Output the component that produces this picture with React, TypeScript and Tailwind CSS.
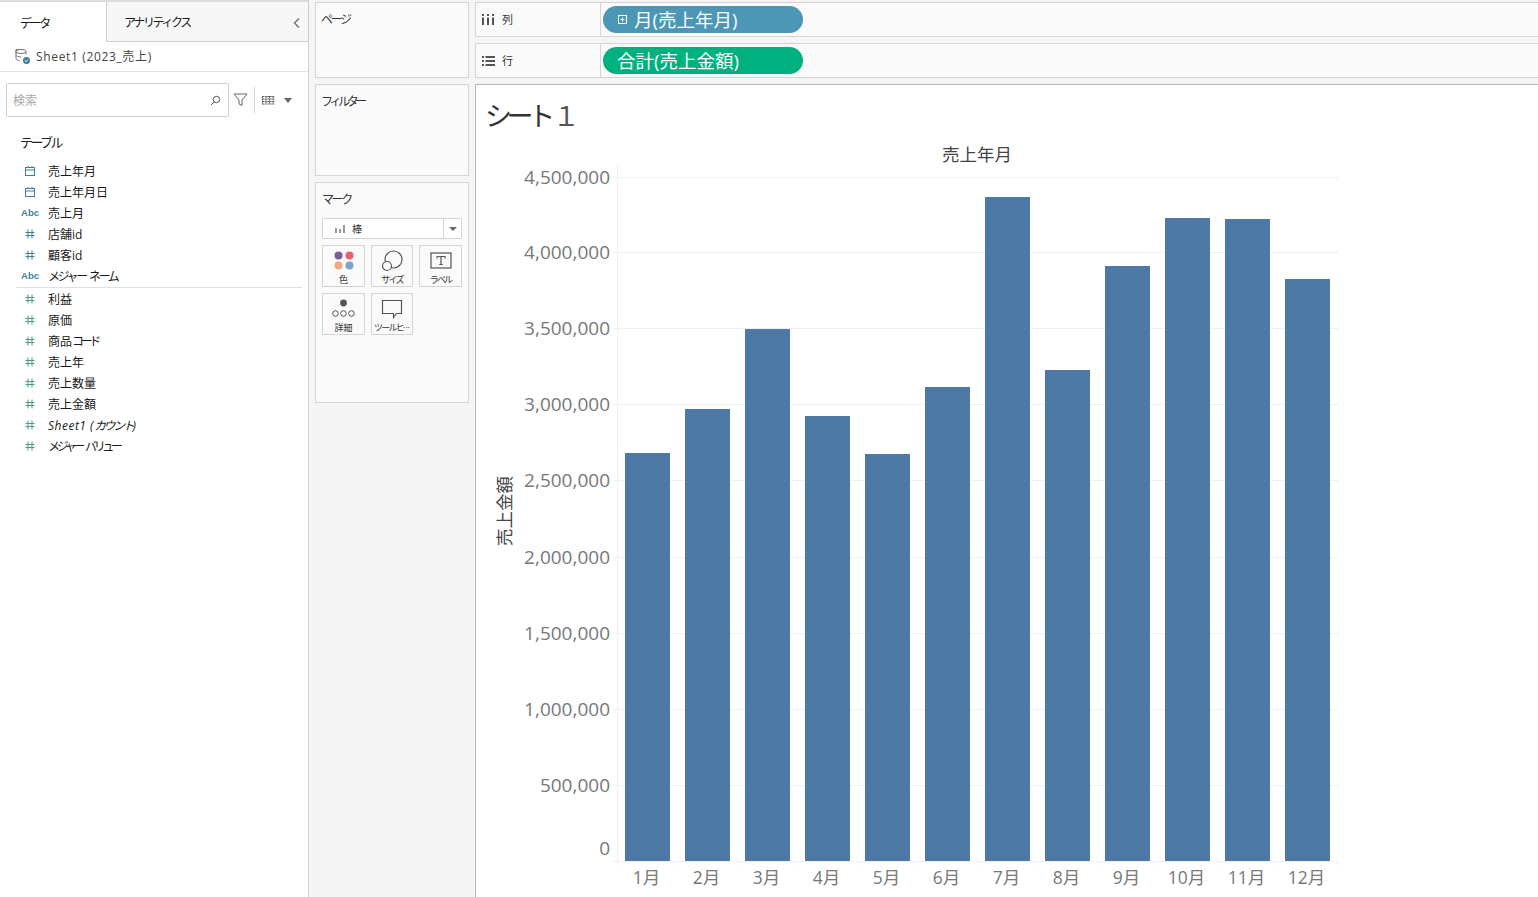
import React from "react";

const F = "[font-family:'Open_Sans','Noto_Sans_CJK_JP',sans-serif]";

// The reference's UI font sets katakana much narrower than its kanji.
function K({ s, tight }: { s: string; tight?: boolean }) {
  const parts = s.split(/([ァ-ヿ]+)/);
  return (
    <>
      {parts.map((p, i) =>
        /^[ァ-ヿ]/.test(p) ? (
          <span key={i} className={tight ? "tracking-[-0.28em]" : "tracking-[-0.2em]"}>{p}</span>
        ) : (
          <span key={i}>{p}</span>
        )
      )}
    </>
  );
}

function CalIcon() {
  return (
    <svg width="12" height="12" viewBox="0 0 12 12" fill="none" stroke="#3f7f9c" strokeWidth="1">
      <rect x="1.5" y="2.5" width="9" height="8" />
      <path d="M1.5 5h9M4 1v2M8 1v2" />
    </svg>
  );
}
function HashIcon({ color }: { color: string }) {
  return (
    <svg width="10" height="10" viewBox="0 0 10 10" fill="none" stroke={color} strokeWidth="1">
      <path d="M3 .5v9M7 .5v9M.5 3.5h9M.5 6.5h9" />
    </svg>
  );
}
function Abc() {
  return <span className="text-[9.5px] leading-none font-bold text-[#3f7f9c] [font-family:'Liberation_Sans',sans-serif]">Abc</span>;
}

type Row = { kind: "cal" | "abc" | "blue" | "green"; name: string; italic?: boolean; tight?: boolean };
const dims: Row[] = [
  { kind: "cal", name: "売上年月" },
  { kind: "cal", name: "売上年月日" },
  { kind: "abc", name: "売上月" },
  { kind: "blue", name: "店舗id" },
  { kind: "blue", name: "顧客id" },
  { kind: "abc", name: "メジャー ネーム" },
];
const meas: Row[] = [
  { kind: "green", name: "利益" },
  { kind: "green", name: "原価" },
  { kind: "green", name: "商品コード", tight: true },
  { kind: "green", name: "売上年" },
  { kind: "green", name: "売上数量" },
  { kind: "green", name: "売上金額" },
  { kind: "green", name: "Sheet1 (カウント)", italic: true },
  { kind: "green", name: "メジャー バリュー", tight: true },
];

function FieldRow({ r }: { r: Row }) {
  return (
    <div className="flex h-[21px] items-center">
      <div className="flex w-[48px] shrink-0 justify-center pl-[12px]">
        {r.kind === "cal" && <CalIcon />}
        {r.kind === "abc" && <Abc />}
        {r.kind === "blue" && <HashIcon color="#3f7f9c" />}
        {r.kind === "green" && <HashIcon color="#4a9c80" />}
      </div>
      <span className={`whitespace-nowrap pt-[2px] text-[12px] text-[#1a1a1a] ${r.italic ? "italic tracking-[0.5px]" : ""}`}><K s={r.name} tight={r.tight} /></span>
    </div>
  );
}

function LeftPanel() {
  return (
    <div className="flex h-full w-[309px] shrink-0 flex-col border-r border-[#cfcfcf] bg-white">
      <div className="flex h-[42px] shrink-0 border-t-2 border-[#dcdcdc]">
        <div className="flex w-[107px] items-center border-r border-[#d0d0d0] pl-[20px] pt-[3px] text-[12px] text-[#1a1a1a]"><K s="データ" /></div>
        <div className="flex flex-1 items-center justify-between border-b border-[#d0d0d0] bg-[#f7f7f7] pl-[17px] pr-[7px] pt-[3px] text-[12px] text-[#1a1a1a]">
          <span><K s="アナリティクス" /></span>
          <svg width="8" height="12" viewBox="0 0 8 12" fill="none" stroke="#666" strokeWidth="1.2"><path d="M6 1.5 1.5 6 6 10.5" /></svg>
        </div>
      </div>
      <div className="flex h-[30px] shrink-0 items-center border-b border-[#e2e2e2] pl-[14px]">
        <svg width="17" height="17" viewBox="0 0 17 17" fill="none" stroke="#777" strokeWidth="1">
          <ellipse cx="7" cy="3.5" rx="5" ry="2" />
          <path d="M2 3.5v7c0 1 1.5 2 3.5 2M12 3.5v3M2 7c0 1 2 2 5 2" />
          <path d="M5 1.5h-3v4" />
          <circle cx="12.5" cy="12.5" r="3.5" fill="#3f7f9c" stroke="none" />
          <path d="m10.8 12.5 1.2 1.2 2-2.2" stroke="#fff" />
        </svg>
        <span className="ml-[5px] pt-px text-[12px] tracking-[0.65px] text-[#444]">Sheet1 (2023_売上)</span>
      </div>
      <div className="flex items-center pl-[6px] pt-[11px]">
        <div className="flex h-[34px] w-[223px] items-center justify-between rounded-[2px] border border-[#cfcfcf] pl-[6px] pr-[7px]">
          <span className="pt-[2px] text-[12px] text-[#a8a8a8]">検索</span>
          <svg width="11" height="11" viewBox="0 0 11 11" fill="none" stroke="#555" strokeWidth="1"><circle cx="6.5" cy="4.5" r="3.2" /><path d="M4.2 6.8 1 10" /></svg>
        </div>
        <svg className="ml-[4px]" width="15" height="14" viewBox="0 0 15 14" fill="none" stroke="#666" strokeWidth="1"><path d="M1 1h13L9 7v5.5L6 11V7z" /></svg>
        <div className="ml-[6px] h-[26px] w-px bg-[#d8d8d8]" />
        <svg className="ml-[7px]" width="13" height="10" viewBox="0 0 13 10" fill="none" stroke="#666" strokeWidth="1"><path d="M0 1.5h13M0 4h13M0 6.5h13M0 9h13M.5 1v8M4 1v8M7.5 1v8M11 1v8" strokeDasharray="2 .6" /></svg>
        <svg className="ml-[9px]" width="8" height="5" viewBox="0 0 8 5" fill="#666"><path d="M0 0h8L4 5z" /></svg>
      </div>
      <div className="pl-[20px] pt-[15px] text-[13px] leading-[20px] text-[#222]"><K s="テーブル" /></div>
      <div className="mt-[8px]">
        {dims.map((r) => <FieldRow key={r.name} r={r} />)}
      </div>
      <div className="ml-[16px] mr-[6px] mt-px h-px bg-[#e0e0e0]" />
      <div>
        {meas.map((r) => <FieldRow key={r.name} r={r} />)}
      </div>
    </div>
  );
}

function MarkBtn({ label, children }: { label: string; children: React.ReactNode }) {
  return (
    <div className="flex h-[42px] flex-col items-center justify-between border border-[#d4d4d4] pt-[2px] pb-[1px]">
      <div className="flex h-[25px] items-center">{children}</div>
      <span className="whitespace-nowrap text-[9px] leading-[11px] text-[#333]"><K s={label} /></span>
    </div>
  );
}

function MiddlePanel() {
  return (
    <div className="flex h-full w-[166px] shrink-0 flex-col gap-[6px] px-[6px] pt-[2px]">
      <div className="h-[76px] border border-[#d4d4d4] bg-[#fafafa] pl-[5px] pt-[8px] text-[12px] leading-[18px] text-[#333]"><K s="ページ" /></div>
      <div className="h-[92px] border border-[#d4d4d4] bg-[#fafafa] pl-[5px] pt-[8px] text-[12px] leading-[18px] text-[#333]"><K s="フィルター" tight /></div>
      <div className="h-[221px] border border-[#d4d4d4] bg-[#fafafa] px-[6px] pt-[8px]">
        <div className="text-[12px] leading-[18px] text-[#333]"><K s="マーク" /></div>
        <div className="mt-[9px] flex h-[21px] items-center rounded-[1px] border border-[#d4d4d4] bg-white">
          <div className="flex flex-1 items-center pl-[12px]">
            <svg width="10" height="9" viewBox="0 0 10 9" fill="#999"><path d="M0 4h2v5H0zM4 5h2v4H4zM8 1h2v8H8z" /></svg>
            <span className="ml-[7px] pt-[2px] text-[10px] text-[#333]">棒</span>
          </div>
          <div className="flex h-full w-[18px] items-center justify-center border-l border-[#d4d4d4]">
            <svg width="8" height="4" viewBox="0 0 8 4" fill="#666"><path d="M0 0h8L4 4z" /></svg>
          </div>
        </div>
        <div className="mt-[6px] grid grid-cols-[43px_42px_43px] gap-x-[6px] gap-y-[6px]">
          <MarkBtn label="色">
            <svg width="20" height="19" viewBox="0 0 20 19">
              <circle cx="4.5" cy="4.5" r="4" fill="#7b5e93" />
              <circle cx="15.5" cy="4.5" r="4" fill="#ee5f72" />
              <circle cx="4.5" cy="14.5" r="4" fill="#f4a582" />
              <circle cx="15.5" cy="14.5" r="4" fill="#7ba3cc" />
            </svg>
          </MarkBtn>
          <MarkBtn label="サイズ">
            <svg width="22" height="22" viewBox="0 0 22 22" fill="none" stroke="#555" strokeWidth="1.2">
              <circle cx="12.5" cy="9.5" r="8.5" />
              <circle cx="6" cy="16" r="4.5" fill="#fafafa" />
            </svg>
          </MarkBtn>
          <MarkBtn label="ラベル">
            <svg width="22" height="17" viewBox="0 0 22 17" fill="none">
              <rect x="1" y="1" width="20" height="15" stroke="#555" strokeWidth="1.2" />
              <path d="M7 4.5h8v2M7 4.5v2M11 4.5v8M9.2 12.5h3.6" stroke="#555" strokeWidth="1.2" />
            </svg>
          </MarkBtn>
          <MarkBtn label="詳細">
            <svg width="23" height="20" viewBox="0 0 23 20" fill="none">
              <circle cx="11.5" cy="4" r="3.4" fill="#555" />
              <circle cx="3.5" cy="14.5" r="2.8" stroke="#555" />
              <circle cx="11.5" cy="14.5" r="2.8" stroke="#555" />
              <circle cx="19.5" cy="14.5" r="2.8" stroke="#555" />
            </svg>
          </MarkBtn>
          <MarkBtn label="ツールヒ···">
            <svg width="22" height="20" viewBox="0 0 22 20" fill="none" stroke="#555" strokeWidth="1.2">
              <path d="M1.5 1.5h19v13h-5l-3 4v-4h-11z" />
            </svg>
          </MarkBtn>
        </div>
      </div>
    </div>
  );
}

function Shelf({ label, icon, pill, pillClass, plus }: { label: string; icon: React.ReactNode; pill: string; pillClass: string; plus?: boolean }) {
  return (
    <div className="flex h-[35px] border-y border-[#d4d4d4] bg-[#fafafa]">
      <div className="flex w-[125px] items-center border-l border-[#d4d4d4] pl-[6px]">
        <div className="flex w-[20px] justify-start">{icon}</div>
        <span className="pt-[2px] text-[11px] text-[#333]">{label}</span>
      </div>
      <div className="flex flex-1 items-center border-l border-[#d4d4d4] pl-[2px]">
        <div className={`flex h-[27px] w-[200px] items-center rounded-full text-white ${pillClass}`}>
          {plus && (
            <svg className="mr-[7px]" width="9" height="9" viewBox="0 0 9 9" fill="none" stroke="#fff" strokeWidth="1"><rect x=".5" y=".5" width="8" height="8" /><path d="M2.5 4.5h4M4.5 2.5v4" /></svg>
          )}
          <span className="whitespace-nowrap pt-[2px] text-[18.5px] leading-none">{pill}</span>
        </div>
      </div>
    </div>
  );
}

const W = 1062;
const bars = [453, 409, 329, 416, 454, 387, 197, 370, 266, 218, 219, 279];
const grid = [177, 252.5, 328.5, 404.5, 480.5, 557, 633, 709, 785];
const yLabels = [
  ["4,500,000", 177], ["4,000,000", 252], ["3,500,000", 328], ["3,000,000", 404], ["2,500,000", 480],
  ["2,000,000", 557], ["1,500,000", 633], ["1,000,000", 709], ["500,000", 785], ["0", 848],
] as const;

function Chart() {
  // svg origin is page x=476, y=130
  const ox = 476, oy = 130;
  return (
    <svg className="block" width={W} height={767} viewBox={`${ox} ${oy} ${W} 767`}>
      <g fontFamily="'Noto Sans CJK JP', sans-serif">
        <text x="977" y="161" textAnchor="middle" fontSize="17.5" fill="#444">売上年月</text>
        <text transform="translate(511 511) rotate(-90)" textAnchor="middle" fontSize="17.5" fill="#444">売上金額</text>
      </g>
      <path d="M617.5 165V866" stroke="#f0f0f0" />
      {[...grid, 861].map((y) => (
        <path key={y} d={`M613 ${Math.floor(y) + 0.5}H1338.5`} stroke="#f0f0f0" />
      ))}
      {Array.from({ length: 13 }).map((_, i) => (
        <path key={i} d={`M${617.5 + 60 * i} 861V866`} stroke="#f0f0f0" />
      ))}
      {bars.map((t, i) => (
        <rect key={i} x={625 + 60 * i} y={t} width="45" height={861 - t} fill="#4e79a7" />
      ))}
      <g fontFamily="'Open Sans', sans-serif" fontSize="19" fill="#787878" textAnchor="end">
        {yLabels.map(([s, y]) => (
          <text key={s} x="610" y={y + 7}>{s}</text>
        ))}
      </g>
      <g fontFamily="'Open Sans','Noto Sans CJK JP', sans-serif" fontSize="17.5" fill="#787878" textAnchor="middle">
        {bars.map((_, i) => (
          <text key={i} x={646.5 + 60 * i} y="884">{i + 1}月</text>
        ))}
      </g>
    </svg>
  );
}

function RightPanel() {
  return (
    <div className="flex h-full min-w-0 flex-1 flex-col pt-[2px]">
      <div className="flex flex-col gap-[6px]">
        <Shelf
          label="列"
          pill="月(売上年月)"
          pillClass="bg-[#4b97b5] pl-[15px]"
          plus
          icon={<svg width="12" height="11" viewBox="0 0 12 11" fill="#555"><path d="M0 0h2v2H0zM5 0h2v2H5zM10 0h2v2h-2zM0 3.5h2V11H0zM5 3.5h2V11H5zM10 3.5h2V11h-2z" /></svg>}
        />
        <Shelf
          label="行"
          pill="合計(売上金額)"
          pillClass="bg-[#00b180] pl-[14px]"
          icon={<svg width="13" height="10" viewBox="0 0 13 10" fill="#555"><path d="M0 0h2v2H0zM3.5 0H13v2H3.5zM0 4h2v2H0zM3.5 4H13v2H3.5zM0 8h2v2H0zM3.5 8H13v2H3.5z" /></svg>}
        />
      </div>
      <div className="mt-[6px] flex min-h-0 flex-1 flex-col border-l border-t border-[#b8b8b8] bg-white">
        <div className="h-[45px] shrink-0 pl-[9px] pt-[11px] text-[27px] leading-[40px] text-[#333]"><K s="シート" /><span className="ml-[3px] text-[#555]">１</span></div>
        <Chart />
      </div>
    </div>
  );
}

export default function App() {
  return (
    <div className={`flex h-[897px] w-[1538px] overflow-hidden bg-[#f5f5f5] ${F}`}>
      <LeftPanel />
      <MiddlePanel />
      <RightPanel />
    </div>
  );
}
